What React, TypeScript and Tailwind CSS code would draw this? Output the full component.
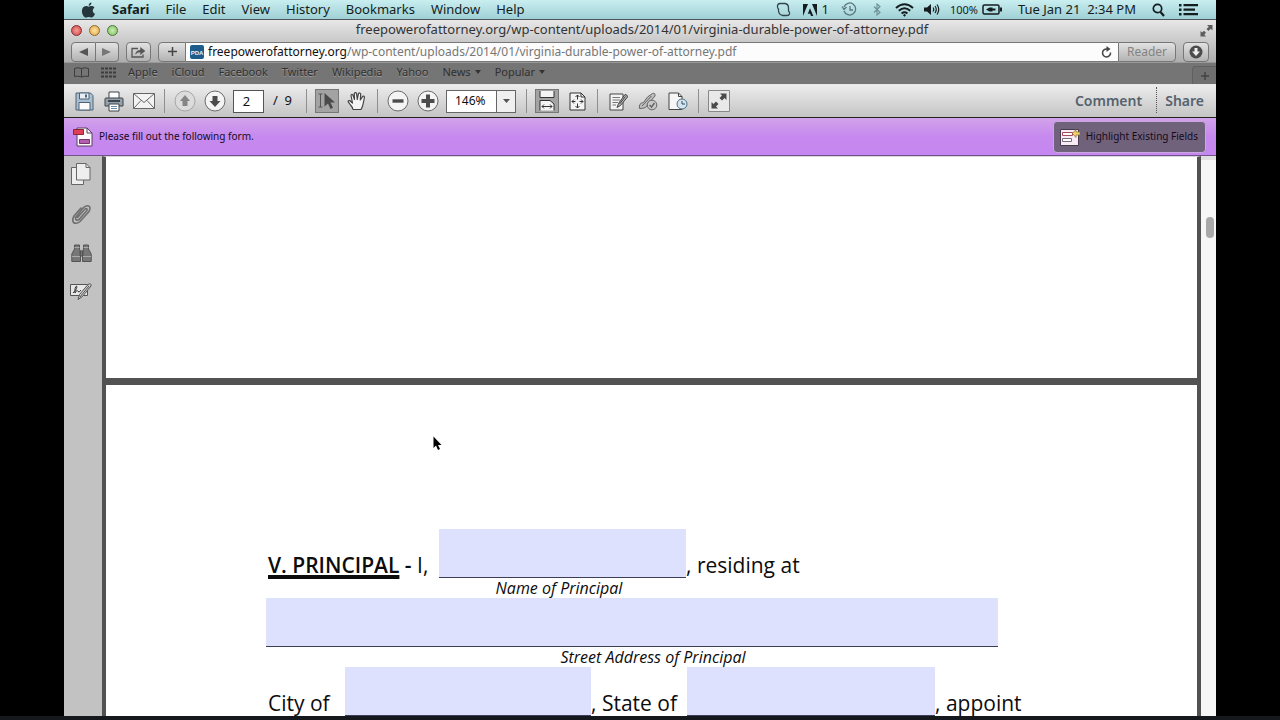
import type { ReactNode } from "react";

const menus = ["File", "Edit", "View", "History", "Bookmarks", "Window", "Help"];
const bookmarks = ["Apple", "iCloud", "Facebook", "Twitter", "Wikipedia", "Yahoo"];

function Separator() {
  return <span className="mx-[5px] h-6 w-px shrink-0 bg-[#8f8f8f]" />;
}

function Tool({ label, pressed = false, children }: { label: string; pressed?: boolean; children: ReactNode }) {
  return (
    <button type="button" aria-label={label} className="flex h-[30px] w-[30px] shrink-0 items-center justify-center">
      <span
        className={
          pressed
            ? "flex h-6 w-6 items-center justify-center border border-[#777] bg-[#a3a3a3]"
            : "flex h-6 w-6 items-center justify-center"
        }
      >
        {children}
      </span>
    </button>
  );
}

function Circle({ faded = false, children }: { faded?: boolean; children: ReactNode }) {
  return (
    <svg width="22" height="22" viewBox="0 0 22 22">
      <circle cx="11" cy="11" r="10" fill={faded ? "#dcdcdc" : "#f4f4f4"} stroke={faded ? "#a6a6a6" : "#6b6b6b"} />
      <g fill={faded ? "#858585" : "#4c4c4c"}>{children}</g>
    </svg>
  );
}

function MenuBar() {
  return (
    <header className="flex h-[19px] shrink-0 items-center justify-between bg-linear-to-b from-[#c9eef0] to-[#9fd0d6] pr-[18px] pl-[17px] text-[13px] leading-[19px] text-[#151d20]">
      <nav className="flex items-center gap-4">
        <button type="button" aria-label="Apple menu">
          <svg width="15" height="16" viewBox="0 0 15 16" fill="#26363d">
            <path d="M10.4 0.6C9 0.8 7.5 2.2 7.7 4 9.3 4 10.6 2.300 10.400.6ZM13.500 5.700C12.600 4.500 11.400 4.100 10.500 4.100 9.300 4.100 8.600 4.700 7.800 4.700 6.900 4.700 6 4.100 4.900 4.100 2.800 4.200.9 6 .9 9 .9 12.300 3.100 15.600 5 15.600 5.900 15.600 6.500 15 7.700 15 8.900 15 9.300 15.600 10.300 15.600 12 15.500 13.600 13.200 14 11.700 11.200 10.600 11.200 6.900 13.500 5.700Z" />
          </svg>
        </button>
        <button type="button" className="font-bold">Safari</button>
        {menus.map((m) => (
          <button key={m} type="button">{m}</button>
        ))}
      </nav>
      <div className="flex items-center">
        <svg className="mr-3" width="15" height="15" viewBox="0 0 15 15" fill="none" stroke="#33464c" strokeWidth="1.300">
          <path d="M1.500 5V3.500Q2 1.500 4 1.500H9Q12.500 2 12.500 6V9Q14 10 13.500 12 13 13.500 11 13.500H7Q3 13 2.500 9V7Q1.500 6 1.500 5Z" />
        </svg>
        <svg className="mr-1" width="14" height="12" viewBox="0 0 14 12" fill="#151d20">
          <path d="M0 0H5L0 12ZM14 0H9L14 12ZM7 4.200L10.300 12H8L7.200 9.700H4.800Z" />
        </svg>
        <span className="mr-3">1</span>
        <svg className="mr-4" width="16" height="15" viewBox="0 0 16 15" fill="none" stroke="#5b767d" strokeWidth="1.300">
          <path d="M3 9A6 6 0 1 0 3 5M1 4.500L3 7.500 5.500 5M9 4V8H12" />
        </svg>
        <svg className="mr-3.5" width="8" height="13" viewBox="0 0 8 13" fill="none" stroke="#6f929b" strokeWidth="1.200">
          <path d="M1 3.500L7 9.500 4 12V1L7 3.500 1 9.500" />
        </svg>
        <svg className="mr-2.5" width="19" height="14" viewBox="0 0 19 14" fill="none" stroke="#151d20" strokeWidth="2">
          <path d="M1 5Q9.500-2.500 18 5M3.800 7.800Q9.500 2.800 15.200 7.800M6.600 10.400Q9.500 8 12.400 10.400" />
          <circle cx="9.500" cy="12.300" r="0.800" fill="#151d20" strokeWidth="1" />
        </svg>
        <svg className="mr-2.5" width="16" height="13" viewBox="0 0 16 13">
          <path d="M0 4.500H3L7 1V12L3 8.500H0Z" fill="#151d20" />
          <path d="M9 4.500Q10.500 6.500 9 8.500M11 3Q13.500 6.500 11 10M13 1.500Q16.500 6.500 13 11.500" fill="none" stroke="#151d20" strokeWidth="1.200" />
        </svg>
        <span className="mr-1 text-[11px]">100%</span>
        <svg className="mr-4" width="20" height="11" viewBox="0 0 20 11">
          <rect x="1" y="1" width="16" height="9" rx="1.500" fill="none" stroke="#151d20" strokeWidth="1.500" />
          <path d="M18 3.500H20V7.500H18ZM4 5.500L7.500 3.500H10.500V4.500H13.500V6.500H10.500V7.500H7.500Z" fill="#151d20" />
        </svg>
        <time className="mr-4 whitespace-pre">Tue Jan 21  2:34 PM</time>
        <button type="button" aria-label="Search" className="mr-3.5">
          <svg width="13" height="14" viewBox="0 0 13 14" fill="none" stroke="#151d20">
            <circle cx="5.500" cy="5.500" r="4.200" strokeWidth="1.700" />
            <path d="M8.500 9L12 13" strokeWidth="2.200" />
          </svg>
        </button>
        <button type="button" aria-label="Notifications">
          <svg width="19" height="13" viewBox="0 0 19 13" fill="#151d20">
            <path d="M0 1H2.500V3.500H0ZM0 5.500H2.500V8H0ZM0 10H2.500V12.500H0ZM4.500 1H19V3.200H4.500ZM4.500 5.500H16V7.700H4.500ZM4.500 10H19V12.200H4.500Z" />
          </svg>
        </button>
      </div>
    </header>
  );
}

function BrowserChrome() {
  const btn = "flex items-center justify-center border border-[#777] bg-linear-to-b from-[#e2e2e2] to-[#b3b3b3]";
  return (
    <div className="shrink-0">
      <div className="bg-linear-to-b from-[#e9e9e9] to-[#adadad]">
        <div className="flex h-[22px] items-center border-t border-[#4e5659] pr-[3px] pb-px pl-[7px]">
          <div className="flex w-16 gap-[7px]">
            <button type="button" aria-label="Close" className="h-[11px] w-[11px] rounded-full border border-[#82302f] bg-radial from-[#f49a98] to-[#cf3f43]" />
            <button type="button" aria-label="Minimize" className="h-[11px] w-[11px] rounded-full border border-[#8c6a2c] bg-radial from-[#fbe3a0] to-[#e3a541]" />
            <button type="button" aria-label="Zoom" className="h-[11px] w-[11px] rounded-full border border-[#4a7a3a] bg-radial from-[#c9efb2] to-[#7dbd61]" />
          </div>
          <h1 className="flex-1 truncate text-center text-[13px] text-[#333]">
            freepowerofattorney.org/wp-content/uploads/2014/01/virginia-durable-power-of-attorney.pdf
          </h1>
          <div className="flex w-16 justify-end">
            <button type="button" aria-label="Full screen">
              <svg width="13" height="13" viewBox="0 0 13 13" fill="#5c5c5c">
                <path d="M7 1H12.500V6.500L10.700 4.700 8.500 7 6.500 5 8.800 2.800ZM0.500 7L2.200 8.500 4 6.700 6 8.700 4.300 10.500 6 12.500H0.500Z" />
              </svg>
            </button>
          </div>
        </div>
        <div className="flex h-[21px] items-center gap-[7px] pr-[7px] pl-[7px]">
          <div className="flex h-5 w-12">
            <button type="button" aria-label="Back" className={`${btn} flex-1 rounded-l`}>
              <svg width="9" height="8" viewBox="0 0 9 8" fill="#555"><path d="M9 0V8L0 4Z" /></svg>
            </button>
            <button type="button" aria-label="Forward" className={`${btn} flex-1 rounded-r border-l-0`}>
              <svg width="9" height="8" viewBox="0 0 9 8" fill="#777"><path d="M0 0V8L9 4Z" /></svg>
            </button>
          </div>
          <button type="button" aria-label="Share page" className={`${btn} h-5 w-[25px] rounded`}>
            <svg width="15" height="12" viewBox="0 0 15 12" fill="none" stroke="#555" strokeWidth="1.300">
              <path d="M7 2.500H1V11H12V8.500" />
              <path d="M4.500 8Q5 4.500 9.500 4V1.500L14 5 9.500 8.500V6Q6.500 5.800 4.500 8Z" fill="#555" strokeWidth="0.500" />
            </svg>
          </button>
          <div className="flex h-5 flex-1">
            <button type="button" aria-label="Add bookmark" className={`${btn} w-7 rounded-l`}>
              <svg width="9" height="9" viewBox="0 0 9 9" stroke="#444" strokeWidth="1.500"><path d="M4.500 0V9M0 4.500H9" /></svg>
            </button>
            <div className="flex flex-1 items-center gap-1 border-y border-[#777] bg-[#fcfcfc] pr-1.5 pl-1">
              <svg className="shrink-0" width="14" height="14" viewBox="0 0 14 14">
                <rect width="14" height="14" rx="2" fill="#1e5c8c" />
                <text x="7" y="9.500" textAnchor="middle" fontSize="6" fontWeight="700" fontFamily="Liberation Sans, sans-serif" fill="#e4f1fa">PDA</text>
              </svg>
              <a href="#address" className="flex-1 truncate text-[12px] leading-[18px] text-[#777]">
                <span className="text-[#111]">freepowerofattorney.org</span>/wp-content/uploads/2014/01/virginia-durable-power-of-attorney.pdf
              </a>
              <button type="button" aria-label="Reload">
                <svg width="11" height="12" viewBox="0 0 11 12" fill="none" stroke="#444" strokeWidth="1.500">
                  <path d="M9.500 6.500A4 4 0 1 1 6 3" />
                  <path d="M5.500 0L9.500 3 5.500 6Z" fill="#444" stroke="none" />
                </svg>
              </button>
            </div>
            <button type="button" className={`${btn} w-[58px] rounded-r text-[12px] text-[#838383]`}>Reader</button>
          </div>
          <button type="button" aria-label="Downloads" className={`${btn} h-5 w-[26px] rounded`}>
            <svg width="14" height="14" viewBox="0 0 14 14">
              <circle cx="7" cy="7" r="6.500" fill="#4b4b4b" />
              <path d="M5.500 3H8.500V6.500H11L7 11 3 6.500H5.500Z" fill="#eee" />
            </svg>
          </button>
        </div>
      </div>
      <div className="flex h-[22px] items-center justify-between border-t border-[#999] bg-[#757575] pl-2.5 text-[11px] leading-4 text-[#303030]">
        <nav className="flex items-center pb-[3px]">
          <button type="button" aria-label="Show bookmarks" className="mr-3">
            <svg width="15" height="11" viewBox="0 0 15 11" fill="none" stroke="#3d3d3d">
              <path d="M7.500 2V10M7.500 1.500Q4 0 .5 1.500V9.500Q4 8.500 7.500 10 11 8.500 14.500 9.500V1.500Q11 0 7.500 1.500Z" />
            </svg>
          </button>
          <button type="button" aria-label="Top sites" className="mr-3">
            <svg width="15" height="11" viewBox="0 0 15 11" fill="none" stroke="#3d3d3d" strokeWidth="2" strokeDasharray="3 1">
              <path d="M0 1.500H15M0 5.500H15M0 9.500H15" />
            </svg>
          </button>
          <div className="flex gap-3.5 text-shadow-[0_1px_0_#9a9a9a]">
            {bookmarks.map((b) => (
              <a key={b} href={`#${b}`}>{b}</a>
            ))}
            <button type="button" className="flex items-center gap-1">News<svg width="6" height="5" fill="#333"><path d="M0 0H6L3 4Z" /></svg></button>
            <button type="button" className="flex items-center gap-1">Popular<svg width="6" height="5" fill="#333"><path d="M0 0H6L3 4Z" /></svg></button>
          </div>
        </nav>
        <button type="button" aria-label="New tab" className="flex h-[18px] w-6 items-center justify-center self-end rounded-tl border-t border-l border-[#606060] bg-[#6f6f6f]">
          <svg width="8" height="8" stroke="#444" strokeWidth="1.500"><path d="M4 0V8M0 4H8" /></svg>
        </button>
      </div>
    </div>
  );
}

function PdfToolbar() {
  return (
    <div className="flex h-[34px] shrink-0 items-center border-t border-b border-t-[#e8e8e8] border-b-[#222] bg-linear-to-b from-[#ececec] to-[#c4c4c4] pr-3 pl-[5px] text-[13px] text-[#111]">
      <Tool label="Save">
        <svg width="19" height="19" viewBox="0 0 19 19" stroke="#4d6376">
          <path d="M1 1H15.500L18 3.500V18H1Z" fill="#a9bfd1" />
          <path d="M4.500 1H14V7H4.500Z" fill="#e9eff4" />
          <path d="M11 2.500V5.500" strokeWidth="2" />
          <path d="M4 10.500H15V18H4Z" fill="#fbfbfb" />
        </svg>
      </Tool>
      <Tool label="Print">
        <svg width="20" height="21" viewBox="0 0 20 21" stroke="#3d444a">
          <path d="M5 8V1H15V8" fill="#fff" />
          <path d="M1 8Q1 7 2 7H18Q19 7 19 8V15H1Z" fill="#94a0aa" />
          <path d="M4 10H16" strokeWidth="2" />
          <path d="M5 13H15V20H5Z" fill="#fff" />
          <path d="M7 15.500H13M7 17.500H13" stroke="#6d8ca5" />
        </svg>
      </Tool>
      <Tool label="Email">
        <svg className="shrink-0" width="22" height="16" viewBox="0 0 22 16" fill="#f3f3f3" stroke="#666">
          <path d="M.5.500H21.500V15.500H.5Z" />
          <path d="M.5.500L11 9.500 21.500.500M.5 15.500L8 7.500M21.500 15.500L14 7.500" fill="none" />
        </svg>
      </Tool>
      <Separator />
      <Tool label="Previous page">
        <Circle faded><path d="M11 5L16 11H13.500V16H8.500V11H6Z" /></Circle>
      </Tool>
      <Tool label="Next page">
        <Circle><path d="M11 17L5.500 11H8.500V6H13.500V11H16.500Z" /></Circle>
      </Tool>
      <input aria-label="Page number" defaultValue="2" className="mx-[3px] h-[23px] w-[31px] border border-[#555] bg-white pr-1 text-center" />
      <span className="w-[34px] shrink-0 pl-1.5 whitespace-pre">/  9</span>
      <Separator />
      <Tool label="Select" pressed>
        <svg width="20" height="20" viewBox="0 0 20 20">
          <path d="M1.500 3H5.500M3.500 3V16M1.500 16H5.500" stroke="#555" fill="none" />
          <path d="M7.500 2V15.500L11 12.500 13.500 18 16 16.800 13.500 11.500H18Z" fill="#4a4a4a" />
        </svg>
      </Tool>
      <Tool label="Hand">
        <svg width="20" height="20" viewBox="0 0 20 20" fill="#f4f4f4" stroke="#444" strokeWidth="1.200" strokeLinejoin="round">
          <path d="M6 18.500Q5.500 16 3.500 14L1.200 10.800Q1 9.300 2.700 9.500L5.500 12 4 4.500Q4.300 2.800 5.800 3.800L7.500 8.500 7.300 2.500Q8.200.800 9.500 2.200L10.300 8.300 11.500 2.500Q13 1.200 13.700 3L13.300 9 15.700 5.300Q17.500 4.700 17.400 6.500L16.200 12.500Q15.800 15.500 14 18.500Z" />
        </svg>
      </Tool>
      <Separator />
      <Tool label="Zoom out">
        <Circle><path d="M5.500 9.300H16.500V12.700H5.500Z" /></Circle>
      </Tool>
      <Tool label="Zoom in">
        <Circle><path d="M9 4.500H13V9H17.500V13H13V17.500H9V13H4.500V9H9Z" /></Circle>
      </Tool>
      <div className="relative mr-[5px] ml-[3px] h-[23px] w-[70px] shrink-0">
        <select aria-label="Zoom level" defaultValue="146" className="h-full w-full appearance-none border border-[#666] bg-white pl-2 text-[12px]">
          <option value="100">100%</option>
          <option value="146">146%</option>
        </select>
        <span className="pointer-events-none absolute inset-y-px right-px flex w-[19px] items-center justify-center border-l border-[#666] bg-[#f0f0f0]">
          <svg width="7" height="4" fill="#555"><path d="M0 0H7L3.500 4Z" /></svg>
        </span>
      </div>
      <Separator />
      <Tool label="Fit width" pressed>
        <svg width="18" height="20" viewBox="0 0 18 20" stroke="#333" fill="#f4f4f4">
          <path d="M2 0V6.500H16V0" />
          <path d="M2 19.500V9.500H12L16 13V19.500" />
          <path d="M4 15.500H14M6 13.500L4 15.500 6 17.500M12 13.500L14 15.500 12 17.500" fill="none" />
        </svg>
      </Tool>
      <Tool label="Fit page">
        <svg width="17" height="19" viewBox="0 0 17 19" stroke="#333" fill="#f4f4f4">
          <path d="M1 1H12L16 5V18H1Z" />
          <path d="M12 1V5H16" fill="none" />
          <path d="M8.500 3V7.500M6.500 5L8.500 3 10.500 5M8.500 16V11.500M6.500 14L8.500 16 10.500 14M3 9.500H6.500M5 7.500L3 9.500 5 11.500M14 9.500H10.500M12 7.500L14 9.500 12 11.500" fill="none" />
        </svg>
      </Tool>
      <Separator />
      <Tool label="Edit text">
        <svg width="19" height="19" viewBox="0 0 19 19" stroke="#444" fill="#f4f4f4">
          <path d="M1 2H14V18H1Z" />
          <path d="M3.500 5.500H11M3.500 8H11M3.500 10.500H9M3.500 13H7" stroke="#777" />
          <path d="M8 15.500L9.500 11.500 16 2.500Q18.500 2.500 18.500 5L11.500 13.500Z" fill="#b5b5b5" />
          <path d="M10.500 12L16.500 4.500" />
        </svg>
      </Tool>
      <Tool label="Sign">
        <svg width="20" height="19" viewBox="0 0 20 19" stroke="#666" fill="#bdbdbd">
          <path d="M1.500 16.500Q.5 11 5.500 10.500 9 4 14.500 1.500 17.500.5 17 4L9.500 12.500Q9 16.500 1.500 16.500Z" />
          <path d="M4 14L13.500 4" fill="none" />
          <circle cx="14" cy="13" r="4.800" fill="#c9c9c9" />
          <path d="M11.500 13L13.500 15 16.500 11" fill="none" strokeWidth="1.500" />
        </svg>
      </Tool>
      <Tool label="History">
        <svg width="20" height="19" viewBox="0 0 20 19" stroke="#444" fill="#f6f6f6">
          <path d="M1 1H10.500L14 4.500V17.500H1Z" />
          <path d="M10.500 1V4.500H14" fill="none" />
          <circle cx="14" cy="12" r="5" fill="#d5e5ef" stroke="#4c6f85" />
          <path d="M14 9V12H17" fill="none" stroke="#2d4a5c" />
        </svg>
      </Tool>
      <Separator />
      <Tool label="Read mode">
        <svg width="22" height="22" viewBox="0 0 22 22">
          <path d="M.5.500H21.500V21.500H.5Z" fill="#e9e9e9" stroke="#888" />
          <path d="M12 3.500H18.500V10L16.500 8 14 10.500 11.500 8 14 5.500ZM3.500 12L5.500 14 8 11.500 10.500 14 8 16.500 10 18.500H3.500Z" fill="#4b4b4b" />
        </svg>
      </Tool>
      <div className="ml-auto flex items-center pb-0.5 text-[14px] font-semibold text-[#56626e]">
        <button type="button">Comment</button>
        <span className="mr-2 ml-3.5 h-[26px] border-l border-dotted border-[#555]" />
        <button type="button">Share</button>
      </div>
    </div>
  );
}

function FormNotice() {
  return (
    <div className="flex h-[38px] shrink-0 items-center justify-between border-b border-[#74508f] bg-linear-to-b from-[#d2a2ea] via-[#c689ee] to-[#c587f0] pr-2.5 pl-[9px] text-[10px] text-[#150a1c]">
      <p className="flex items-center gap-1.5">
        <svg width="20" height="20" viewBox="0 0 20 20">
          <path d="M4 1H14L19 6V19H4Z" fill="#fbf7fb" stroke="#594158" />
          <path d="M14 1V6H19" fill="none" stroke="#594158" />
          <path d="M.5 2.500H10.500V7.500H.5Z" fill="#df3f56" stroke="#8c2436" />
          <path d="M6.500 12.500H16.500V16.500H6.500Z" fill="#b45fae" stroke="#75376f" />
        </svg>
        Please fill out the following form.
      </p>
      <button type="button" className="flex h-8 items-center gap-1.5 rounded border border-[#c9a8dd] bg-[#71627c] pr-[7px] pl-1.5">
        <svg width="20" height="18" viewBox="0 0 20 18">
          <path d="M.5 1.500H18.500V17.500H.5Z" fill="#f8ecf4" stroke="#4a3a50" />
          <path d="M2.500 4.500H12.500V7.500H2.500Z" fill="#fff" stroke="#a8485c" />
          <path d="M2.500 10.500H11.500V13.500H2.500Z" fill="#fff" stroke="#7a6a80" />
          <path d="M12.500 5.500L16 1.500V4H20V7H16V9.500Z" fill="#f1d568" stroke="#8a6d1f" strokeWidth="0.700" />
        </svg>
        Highlight Existing Fields
      </button>
    </div>
  );
}

function SidePanel() {
  return (
    <aside className="flex w-[38px] shrink-0 flex-col items-center gap-[18px] bg-[#c2c2c2] pt-[7px] pr-1">
      <button type="button" aria-label="Pages">
        <svg width="20" height="22" viewBox="0 0 20 22" fill="#eee" stroke="#666">
          <path d="M.5 4.500H12.500V21.500H.5Z" />
          <path d="M5.500.500H15L19 4.500V17H5.500Z" />
          <path d="M15 .5V4.500H19" fill="none" />
        </svg>
      </button>
      <button type="button" aria-label="Attachments">
        <svg width="21" height="22" viewBox="0 0 21 22" fill="none" stroke="#6e6e6e" strokeWidth="1.600" strokeLinecap="round">
          <path d="M6.500 14.500L14 6Q16.500 4.500 16 7.500L8 16.500Q4.500 18.500 4.500 14.500L12.500 4.500Q16 1.500 18.500 3.500 19.500 5.500 18 8.500L9 18.500Q5.500 21.500 2.500 19.500 .8 17 3 13L10 5" />
        </svg>
      </button>
      <button type="button" aria-label="Find">
        <svg width="21" height="21" viewBox="0 0 21 21" fill="#777" stroke="#555">
          <path d="M3.500 2H8.500V6L9.500 9V18.500H.8V11L3.500 6ZM12.500 2H17.500V6L20.200 11V18.500H11.500V9L12.500 6ZM9 8H12V13H9Z" />
          <path d="M1 13.500H9M12 13.500H20M3.500 4.500H8.500M12.500 4.500H17.500" stroke="#aaa" />
        </svg>
      </button>
      <button type="button" aria-label="Signatures">
        <svg width="22" height="19" viewBox="0 0 22 19" fill="#e8e8e8" stroke="#555">
          <path d="M.5 2.500H17.500V13.500H.5Z" />
          <path d="M3 11Q8 6 6.500 4 4.500 5 5 11 7 7 8 9.500 9 11 11 8" fill="none" stroke="#333" />
          <path d="M8 17.500L9.500 12.500 18 2.500Q21.500.5 21 4L12.500 14.500Z" fill="#c9c9c9" />
          <path d="M10 15L19 4" />
        </svg>
      </button>
    </aside>
  );
}

function Field({ id, className }: { id: string; className: string }) {
  return <input id={id} type="text" className={`h-[49px] shrink-0 border-b border-[#3d3d55] bg-[#dee1fd] px-2 outline-none ${className}`} />;
}

function Document() {
  return (
    <main className="relative flex min-w-0 flex-1 flex-col gap-[7px] overflow-hidden border-x-4 border-t border-[#525252] border-t-[#d8d8d8] bg-[#525252]">
      <section className="h-[221px] shrink-0 bg-white" aria-label="Page 1" />
      <section className="flex-1 bg-white pt-36 pl-[160px] font-['Open_Sans',sans-serif] text-[21px] leading-[26px] text-[#0c0c0c]" aria-label="Page 2">
        <form>
          <div className="flex items-end">
            <label htmlFor="name" className="w-[173px] shrink-0 pl-0.5 whitespace-nowrap">
              <strong className="font-semibold underline decoration-4 underline-offset-2 [text-decoration-skip-ink:none]">V. PRINCIPAL</strong>
              <strong className="font-semibold"> - </strong>I,
            </label>
            <Field id="name" className="w-[247px]" />
            <span>, residing at</span>
          </div>
          <label htmlFor="name" className="ml-[173px] block h-5 w-60 text-center text-[16px] leading-5 italic">Name of Principal</label>
          <Field id="street" className="block w-[732px]" />
          <label htmlFor="street" className="block h-5 w-[774px] text-center text-[16px] leading-5 italic">Street Address of Principal</label>
          <div className="flex items-end whitespace-nowrap">
            <label htmlFor="city" className="w-[79px] shrink-0 pl-0.5">City of</label>
            <Field id="city" className="w-[246px]" />
            <label htmlFor="state" className="w-24 shrink-0">, State of</label>
            <Field id="state" className="w-[248px]" />
            <span>, appoint</span>
          </div>
        </form>
      </section>
      <svg className="absolute top-[279px] left-[327px]" width="9" height="15" viewBox="0 0 9 15">
        <path d="M.5.500V12L3 9.500 5 14 7 13 5 9H8.500Z" fill="#000" />
      </svg>
    </main>
  );
}

export default function App() {
  return (
    <div className="flex h-screen flex-col overflow-hidden border-b-4 border-[#15181d] bg-black px-16 font-['Noto_Sans',sans-serif]">
      <MenuBar />
      <BrowserChrome />
      <PdfToolbar />
      <FormNotice />
      <div className="flex min-h-0 flex-1">
        <SidePanel />
        <Document />
        <div className="w-[15px] shrink-0 border-t-4 border-[#e0e0e0] bg-[#f7f7f7] pt-[57px] pl-[5px]">
          <div className="h-[21px] w-2 rounded-full bg-[#a9a9a9]" />
        </div>
      </div>
    </div>
  );
}
